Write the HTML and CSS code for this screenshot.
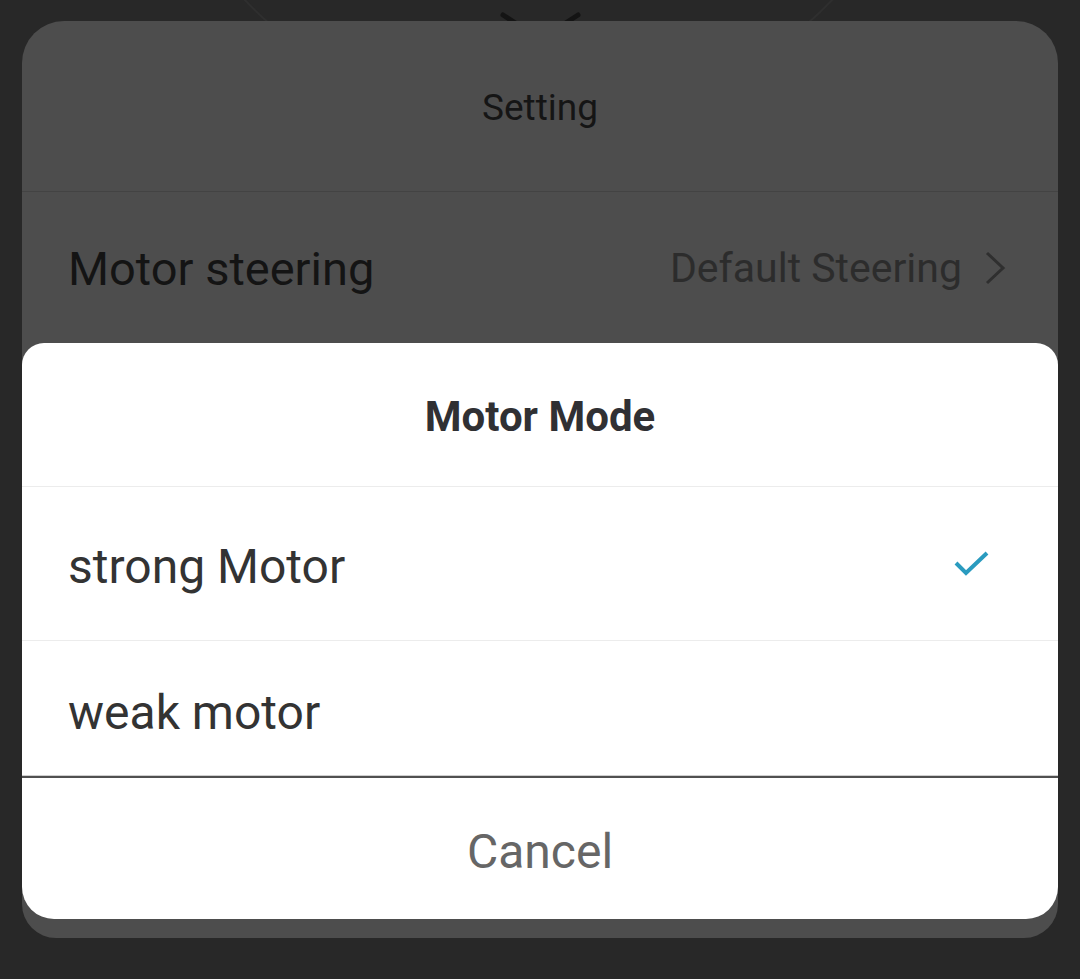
FILE: index.html
```html
<!DOCTYPE html>
<html>
<head>
<meta charset="utf-8">
<link rel="stylesheet" href="styles.css">
</head>
<body>
<div class="screen">
  <svg class="backdrop-art" width="1080" height="40" viewBox="0 0 1080 40">
    <path d="M243 -2 Q256 12 270 24" stroke="#2f2f2f" stroke-width="2" fill="none"/>
    <path d="M834 -2 Q821 12 807 24" stroke="#2f2f2f" stroke-width="2" fill="none"/>
    <path d="M503 15 L520 26 M578 15 L561 26" stroke="#141414" stroke-width="5" stroke-linecap="round" fill="none"/>
  </svg>
  <div class="card">
    <div class="card-title">Setting</div>
    <div class="card-row">
      <span class="row-label">Motor steering</span>
      <span class="row-value">Default Steering
        <svg class="chev" width="22" height="34" viewBox="0 0 22 34"><path d="M3 2 L19 17 L3 32" stroke="#2f2f2f" stroke-width="3" fill="none"/></svg>
      </span>
    </div>
    <div class="dialog">
      <div class="dialog-title">Motor Mode</div>
      <div class="option option-first">
        <span>strong Motor</span>
        <svg class="check" width="40" height="30" viewBox="0 0 40 30"><path d="M4 12 L14 22 L35 2" stroke="#2a9bbf" stroke-width="4" fill="none"/></svg>
      </div>
      <div class="option option-second"><span>weak motor</span></div>
      <div class="divider"></div>
      <div class="cancel">Cancel</div>
    </div>
  </div>
</div>
</body>
</html>
```

FILE: styles.css
```css
html, body {
  margin: 0;
  padding: 0;
  background: #282828;
}
body {
  width: 1080px;
  height: 979px;
  overflow: hidden;
  font-family: Roboto, "Noto Sans", sans-serif;
}
.screen {
  position: relative;
  padding: 21px 22px 0 22px;
}
.backdrop-art {
  position: absolute;
  left: 0;
  top: 0;
}
.card {
  position: relative;
  height: 917px;
  background: #4d4d4d;
  border-radius: 42px 42px 34px 34px;
}
.card-title {
  height: 171px;
  display: flex;
  align-items: center;
  justify-content: center;
  font-size: 37px;
  color: #151515;
  border-bottom: 1px solid #434343;
  box-sizing: border-box;
  padding-top: 3px;
}
.card-row {
  height: 152px;
  display: flex;
  align-items: center;
  justify-content: space-between;
  padding: 0 52px 0 46px;
  box-sizing: border-box;
}
.row-label {
  font-size: 47px;
  color: #141414;
}
.row-value {
  font-size: 41px;
  color: #2c2c2c;
  display: flex;
  align-items: center;
  gap: 22px;
}
.dialog {
  position: absolute;
  left: 0;
  right: 0;
  top: 322px;
  height: 576px;
  background: #fff;
  border-radius: 22px 22px 32px 32px;
  display: flex;
  flex-direction: column;
  overflow: hidden;
}
.dialog-title {
  height: 144px;
  display: flex;
  align-items: center;
  justify-content: center;
  font-size: 42px;
  font-weight: 700;
  color: #303033;
  border-bottom: 1px solid #ececec;
  box-sizing: border-box;
  padding-top: 3px;
}
.option {
  display: flex;
  align-items: center;
  justify-content: space-between;
  padding: 0 66px 0 46px;
  font-size: 48px;
  color: #333;
  box-sizing: border-box;
}
.option-first {
  height: 154px;
  border-bottom: 1px solid #ececec;
  padding-top: 5px;
}
.option-first .check {
  margin-top: 0;
}
.option-second {
  height: 134px;
  padding-top: 9px;
}
.divider {
  height: 3px;
  background: linear-gradient(#cfcfcf 0 1px, #505050 1px 3px);
}
.cancel {
  flex: 1;
  display: flex;
  align-items: center;
  justify-content: center;
  font-size: 48px;
  color: #666;
  padding-top: 6px;
}
```
